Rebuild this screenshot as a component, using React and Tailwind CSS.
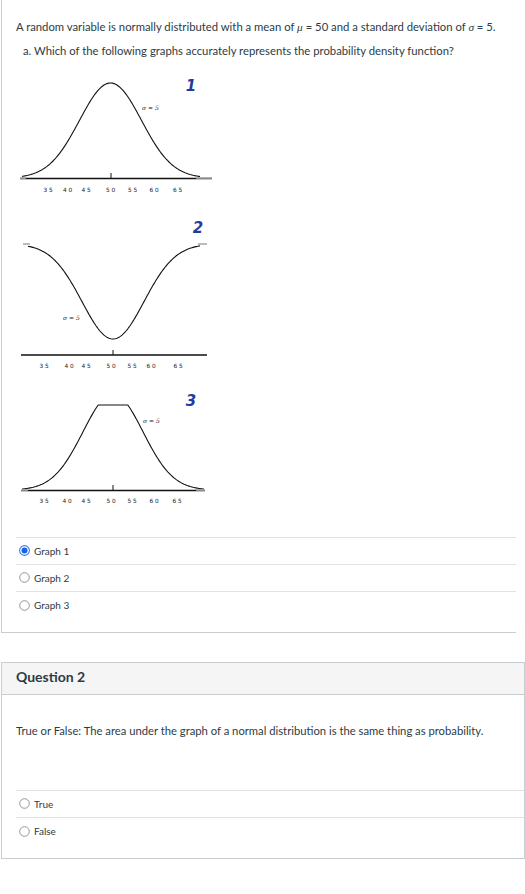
import React from "react";

const font = { fontFamily: "Lato, 'Noto Sans', sans-serif" };

function gauss(cx, sigma, base, amp, x0, x1, sign = -1, clip = null) {
  const pts = [];
  for (let x = x0; x <= x1; x += 1) {
    let h = amp * Math.exp(-((x - cx) ** 2) / (2 * sigma * sigma));
    if (clip !== null && h > clip) h = clip;
    const y = base + sign * h;
    pts.push(`${x},${y.toFixed(2)}`);
  }
  return pts.join(" ");
}

function Labels({ xs, y }) {
  const vals = ["3 5", "4 0", "4 5", "5 0", "5 5", "6 0", "6 5"];
  return (
    <g fontSize="5.8" fill="#222" fontFamily="'DejaVu Sans', sans-serif" textAnchor="middle">
      {vals.map((v, i) => (
        <text key={v} x={xs[i]} y={y}>
          {v}
        </text>
      ))}
    </g>
  );
}

function Num({ x, y, n }) {
  return (
    <text
      x={x}
      y={y}
      textAnchor="middle"
      fontSize="15"
      fontWeight="bold"
      fontStyle="italic"
      fill="#1f3d99"
      fontFamily="'DejaVu Sans', sans-serif"
    >
      {n}
    </text>
  );
}

function Sigma({ x, y }) {
  return (
    <text x={x} y={y} fontSize="6" fontStyle="italic" fill="#222" fontFamily="'DejaVu Serif', serif">
      σ = 5
    </text>
  );
}

function Graph1() {
  return (
    <svg width="218" height="130" viewBox="2 70 218 130" className="block">
      <line x1="20" y1="177.5" x2="212" y2="177.5" stroke="#111" strokeWidth="1.4" />
      <line x1="111" y1="172" x2="111" y2="177.5" stroke="#111" strokeWidth="1" />
      <polyline points={gauss(110.5, 31, 177, 95, 22, 200)} fill="none" stroke="#111" strokeWidth="1.1" />
      <line x1="20" y1="177" x2="26" y2="177" stroke="#aaa" strokeWidth="1.6" />
      <line x1="196" y1="177" x2="212" y2="177" stroke="#aaa" strokeWidth="1.6" />
      <Sigma x={142} y={109} />
      <Num x={191} y={90} n="1" />
      <Labels xs={[48, 67.5, 86, 110.5, 132.5, 154, 177.5]} y={191} />
    </svg>
  );
}

function Graph2() {
  return (
    <svg width="218" height="172" viewBox="2 200 218 172" className="block">
      <polyline points={gauss(113, 31, 243, 95, 28, 200, 1)} fill="none" stroke="#111" strokeWidth="1.1" />
      <line x1="23" y1="243" x2="30" y2="243" stroke="#aaa" strokeWidth="1.6" />
      <line x1="198" y1="243" x2="207" y2="243" stroke="#aaa" strokeWidth="1.6" />
      <line x1="21" y1="354" x2="207" y2="354" stroke="#111" strokeWidth="1.4" />
      <line x1="113" y1="349" x2="113" y2="354" stroke="#111" strokeWidth="1" />
      <Sigma x={63} y={319} />
      <Num x={198} y={232} n="2" />
      <Labels xs={[44, 69, 86, 111, 132, 151, 178]} y={367} />
    </svg>
  );
}

function Graph3() {
  return (
    <svg width="218" height="140" viewBox="2 372 218 140" className="block">
      <polyline points={gauss(113, 30, 489, 96, 22, 204, -1, 85)} fill="none" stroke="#111" strokeWidth="1.1" />
      <line x1="21" y1="489.5" x2="205" y2="489.5" stroke="#111" strokeWidth="1.4" />
      <line x1="113" y1="484" x2="113" y2="489.5" stroke="#111" strokeWidth="1" />
      <line x1="21" y1="489" x2="28" y2="489" stroke="#aaa" strokeWidth="1.6" />
      <line x1="196" y1="489" x2="205" y2="489" stroke="#aaa" strokeWidth="1.6" />
      <Sigma x={143} y={422} />
      <Num x={191} y={405} n="3" />
      <Labels xs={[44, 67, 86, 111, 132, 154, 177]} y={502} />
    </svg>
  );
}

function Radio({ checked }) {
  return (
    <svg width="11" height="11" viewBox="0 0 11 11" className="block shrink-0">
      {checked ? (
        <>
          <circle cx="5.5" cy="5.5" r="4.9" fill="#fff" stroke="#3f7ee8" strokeWidth="1.1" />
          <circle cx="5.5" cy="5.5" r="3" fill="#1a62e6" />
        </>
      ) : (
        <circle cx="5.5" cy="5.5" r="4.8" fill="#fff" stroke="#8a8a8a" strokeWidth="0.9" />
      )}
    </svg>
  );
}

function Option({ label, checked, last }) {
  return (
    <li
      className={`flex h-[27px] items-center pl-[3px] pb-[1px] ${last ? "" : "border-b border-[#e2e2e2]"}`}
    >
      <Radio checked={checked} />
      <span className="ml-[4px] text-[10px] leading-[14px] text-[#2d3b45]">{label}</span>
    </li>
  );
}

export default function App() {
  return (
    <div className="h-[894px] w-[525px] overflow-hidden bg-white" style={font}>
      <div className="ml-[1px] w-[515px] border-b border-l border-[#c7cdd1] pb-[13px]">
        <div className="pl-[14px] pt-[19px] text-[11.3px] leading-[16px] text-[#2d3b45]">
          <p>
            A random variable is normally distributed with a mean of <i className="font-serif">μ</i> = 50 and a
            standard deviation of <i className="font-serif">σ</i> = 5.
          </p>
          <p className="mt-[7px] pl-[7px]">a. Which of the following graphs accurately represents the probability density function?</p>
        </div>
        <div className="mt-[12px]">
          <Graph1 />
          <Graph2 />
          <Graph3 />
        </div>
        <ul className="ml-[14px] mt-[24px] border-t border-[#e2e2e2]">
          <Option label="Graph 1" checked />
          <Option label="Graph 2" />
          <Option label="Graph 3" last />
        </ul>
      </div>

      <div className="ml-[1px] mt-[29px] w-[524px] border border-[#c7cdd1] pb-[13px]">
        <div className="flex h-[32px] items-center border-b border-[#c7cdd1] bg-[#f5f5f5] pb-[4px] pl-[14px]">
          <h2 className="text-[14px] font-bold leading-[18px] text-[#2d3b45]">Question 2</h2>
        </div>
        <p className="pl-[14px] pt-[28px] text-[11.25px] leading-[16px] text-[#2d3b45]">
          True or False: The area under the graph of a normal distribution is the same thing as probability.
        </p>
        <ul className="ml-[14px] mt-[51px] border-t border-[#e2e2e2]">
          <Option label="True" />
          <Option label="False" last />
        </ul>
      </div>
    </div>
  );
}
